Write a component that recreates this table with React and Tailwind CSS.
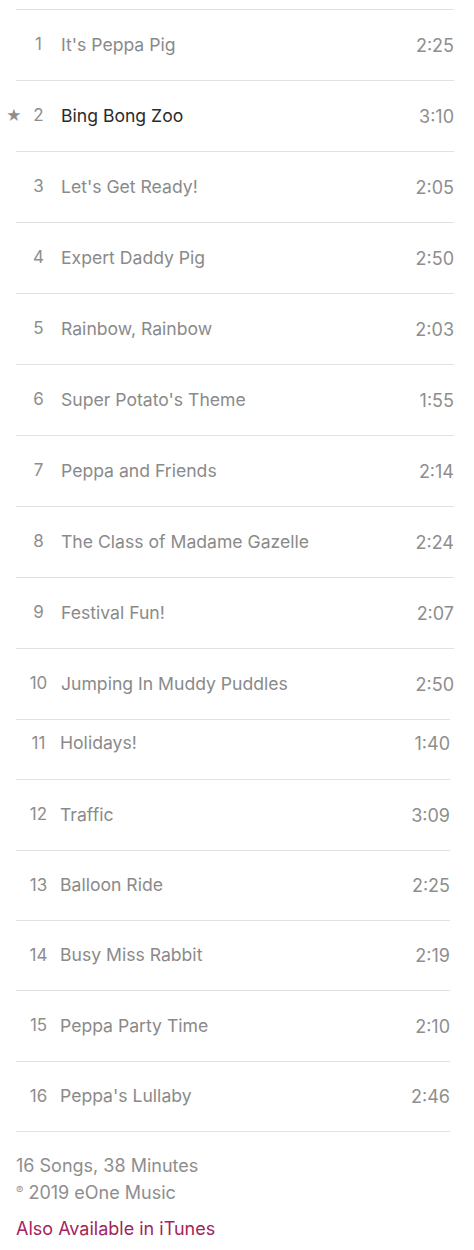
const SONGS = [
  { n: 1, title: "It's Peppa Pig", time: '2:25' },
  { n: 2, title: 'Bing Bong Zoo', time: '3:10', star: true },
  { n: 3, title: "Let's Get Ready!", time: '2:05' },
  { n: 4, title: 'Expert Daddy Pig', time: '2:50' },
  { n: 5, title: 'Rainbow, Rainbow', time: '2:03' },
  { n: 6, title: "Super Potato's Theme", time: '1:55' },
  { n: 7, title: 'Peppa and Friends', time: '2:14' },
  { n: 8, title: 'The Class of Madame Gazelle', time: '2:24' },
  { n: 9, title: 'Festival Fun!', time: '2:07' },
  { n: 10, title: 'Jumping In Muddy Puddles', time: '2:50' },
]

const MORE = [
  { n: 11, title: 'Holidays!', time: '1:40', h: 'h-[60px] pb-[12px]' },
  { n: 12, title: 'Traffic', time: '3:09', h: 'h-[71px]' },
  { n: 13, title: 'Balloon Ride', time: '2:25', h: 'h-[70px]' },
  { n: 14, title: 'Busy Miss Rabbit', time: '2:19', h: 'h-[70px]' },
  { n: 15, title: 'Peppa Party Time', time: '2:10', h: 'h-[71px]' },
  { n: 16, title: "Peppa's Lullaby", time: '2:46', h: 'h-[70px]' },
]

function Row({ song, h, right, titleGap }) {
  return (
    <div className={`relative flex items-center border-t border-[#e2e2e2] ml-4 ${right} ${h}`}>
      {song.star && (
        <span className="absolute left-[-10px] text-[15px] text-[#8e8e8e]">★</span>
      )}
      <span className="w-[45px] text-center text-[17px] text-[#8e8e8e]">{song.n}</span>
      <span className={`${titleGap} flex-1 text-[17.6px] ${song.star ? 'text-[#2b2b2b]' : 'text-[#8a8a8a]'}`}>
        {song.title}
      </span>
      <span className="text-[18px] text-[#8e8e8e]">{song.time}</span>
    </div>
  )
}

export default function App() {
  return (
    <div className="w-[474px] bg-white pt-[9px]" style={{ fontFamily: "Inter, 'Noto Sans', sans-serif" }}>
      {SONGS.map(s => (
        <Row key={s.n} song={s} h="h-[71px]" right="mr-[20px]" titleGap="ml-0" />
      ))}
      {MORE.map(s => (
        <Row key={s.n} song={s} h={s.h} right="mr-[24px]" titleGap="-ml-px" />
      ))}
      <div className="border-t border-[#e2e2e2] ml-4 mr-[24px]" />
      <div className="px-4 pt-[22px] text-[18px] leading-[24px] text-[#8e8e8e]">
        <div>16 Songs, 38 Minutes</div>
        <div><span className="text-[11px] align-[5px]">℗</span> 2019 eOne Music</div>
      </div>
      <div className="px-4 pt-[10px] text-[18px] text-[#a3245a]">Also Available in iTunes</div>
    </div>
  )
}
